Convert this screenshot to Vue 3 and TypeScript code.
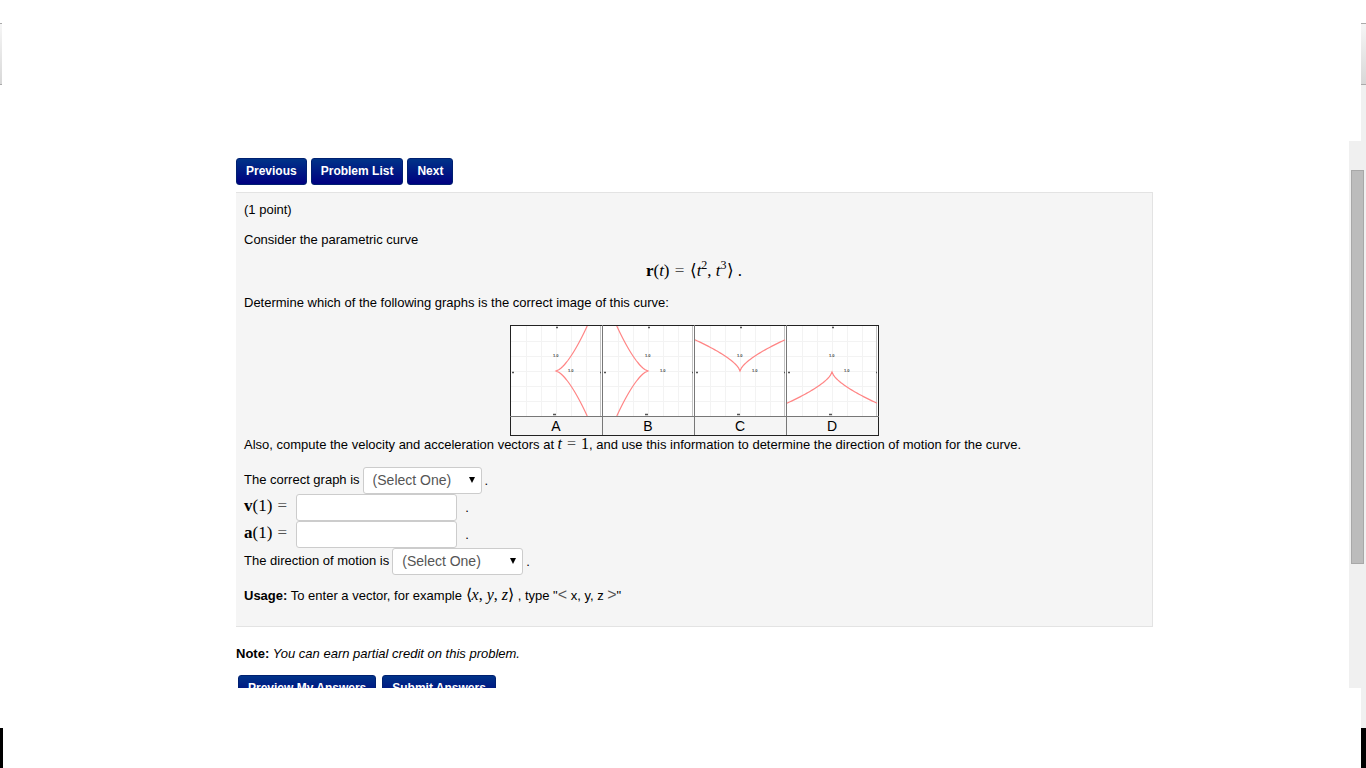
<script setup lang="ts">
import { ref } from 'vue'

type Direction = 'right' | 'left' | 'up' | 'down'

interface Graph {
  label: string
  points: string
}

const centre = 45
const unit = 15

function cusp(direction: Direction): string {
  const points: string[] = []
  for (let i = -30; i <= 30; i++) {
    const along = (i / 30) * 3 * unit
    const away = Math.pow(Math.abs(i / 10), 2 / 3) * unit
    if (direction === 'right') points.push(`${centre + away},${centre + along}`)
    if (direction === 'left') points.push(`${centre - away},${centre + along}`)
    if (direction === 'up') points.push(`${centre + along},${centre - away}`)
    if (direction === 'down') points.push(`${centre + along},${centre + away + 1}`)
  }
  return points.join(' ')
}

const graphs: Graph[] = [
  { label: 'A', points: cusp('right') },
  { label: 'B', points: cusp('left') },
  { label: 'C', points: cusp('up') },
  { label: 'D', points: cusp('down') },
]

const gridLines = [15, 30, 45, 60, 75]
const graphChoice = ref('')
const motionChoice = ref('')
const velocity = ref('')
const acceleration = ref('')
</script>

<template>
  <div class="window">
    <div class="top">
      <div class="toolbar-edge left"></div>
      <div class="toolbar-edge right"></div>
    </div>

    <div class="viewport">
      <main class="content">
        <nav class="buttons">
          <button type="button">Previous</button>
          <button type="button">Problem List</button>
          <button type="button">Next</button>
        </nav>

        <section class="problem">
          <p>(1 point)</p>
          <p>Consider the parametric curve</p>
          <div class="formula math"><b>r</b>(<i>t</i>) <span class="eq">=</span> ⟨<i>t</i><sup>2</sup>, <i>t</i><sup>3</sup>⟩ .</div>
          <p>Determine which of the following graphs is the correct image of this curve:</p>

          <table class="graphs">
            <tbody>
              <tr>
                <td v-for="graph in graphs" :key="graph.label">
                  <svg class="plot" viewBox="0 0 91 90" role="img" :aria-label="'Graph ' + graph.label">
                    <rect width="91" height="90" fill="#fff" />
                    <g stroke="#f3f3f3" stroke-width="1">
                      <line v-for="g in gridLines" :key="'v' + g" :x1="g + 0.5" y1="0" :x2="g + 0.5" y2="90" />
                      <line v-for="g in gridLines" :key="'h' + g" x1="0" :y1="g + 0.5" x2="90" :y2="g + 0.5" />
                    </g>
                    <path d="M89.5 0V90" stroke="#c4c4c4" />
                    <g class="tick">
                      <text x="42" y="31">1.0</text>
                      <text x="57" y="46">1.0</text>
                    </g>
                    <path d="M1 46.5H3M89 46.5H90M45 1.5H47M42 88.5H45" stroke="#555" stroke-width="1.4" />
                    <polyline :points="graph.points" fill="none" stroke="#ff8585" stroke-width="1.2" />
                  </svg>
                </td>
              </tr>
              <tr>
                <td v-for="graph in graphs" :key="graph.label" class="name">{{ graph.label }}</td>
              </tr>
            </tbody>
          </table>

          <p class="also">Also, compute the velocity and acceleration vectors at <span class="math"><i>t</i> <span class="eq">=</span> 1</span>, and use this information to determine the direction of motion for the curve.</p>

          <div class="row">
            <label for="graph">The correct graph is</label>
            <span class="picker">
              <select id="graph" v-model="graphChoice" class="graph-select">
                <option value="">(Select One)</option>
                <option v-for="graph in graphs" :key="graph.label">{{ graph.label }}</option>
              </select>
              <svg viewBox="0 0 6 6"><path d="M0 0H6L3 6Z" /></svg>
            </span>
            <span>.</span>
          </div>
          <div class="row answer">
            <label for="velocity" class="math"><b>v</b>(1) <span class="eq">=</span></label>
            <input id="velocity" v-model="velocity" type="text" />
            <span>.</span>
          </div>
          <div class="row answer">
            <label for="acceleration" class="math"><b>a</b>(1) <span class="eq">=</span></label>
            <input id="acceleration" v-model="acceleration" type="text" />
            <span>.</span>
          </div>
          <div class="row">
            <label for="motion">The direction of motion is</label>
            <span class="picker">
              <select id="motion" v-model="motionChoice" class="motion-select">
                <option value="">(Select One)</option>
              </select>
              <svg viewBox="0 0 6 6"><path d="M0 0H6L3 6Z" /></svg>
            </span>
            <span>.</span>
          </div>

          <p class="usage"><b>Usage:</b> To enter a vector, for example <span class="math">⟨<i>x</i>, <i>y</i>, <i>z</i>⟩</span> , type "<span class="angle">&lt;</span> x, y, z <span class="angle">&gt;</span>"</p>
        </section>

        <p class="note"><b>Note:</b> <i>You can earn partial credit on this problem.</i></p>
        <div class="buttons submit">
          <button type="button">Preview My Answers</button>
          <button type="button">Submit Answers</button>
        </div>
      </main>
      <div class="scrollbar"><div class="thumb"></div></div>
    </div>

    <div class="bottom">
      <div class="task-edge left"></div>
      <div class="task-edge right"></div>
    </div>
  </div>
</template>

<style>
body {
  background: #fff;
  overflow: hidden;
}
</style>

<style scoped>
.window {
  display: grid;
  grid-template-rows: 141px minmax(0, 1fr) 80px;
  height: 100vh;
  font: 13px/20px "Liberation Sans", Arial, sans-serif;
  color: #000;
}
.top,
.bottom {
  display: flex;
  justify-content: space-between;
}
.toolbar-edge {
  box-sizing: border-box;
  width: 2px;
  height: 62px;
  margin-top: 23px;
  border-top: 1px solid #aaa;
  border-bottom: 1px solid #aaa;
  background: linear-gradient(#f6f6f6, #d8d8d8);
}
.top .right {
  box-sizing: content-box;
  width: 5px;
  height: 60px;
  box-shadow: 0 56px 0 #f0f0f0;
}
.task-edge {
  width: 3px;
  border-top: 40px solid transparent;
  background: #000 padding-box;
}
.bottom .right {
  width: 5px;
  border-top-color: #f0f0f0;
}
.viewport {
  display: flex;
  overflow: hidden;
}
.content {
  flex: 1;
  padding: 17px 196px 0 236px;
}
.scrollbar {
  box-sizing: border-box;
  width: 17px;
  padding: 29px 2px 0;
  background: #f0f0f0;
}
.thumb {
  box-sizing: border-box;
  width: 13px;
  height: 76%;
  border: 1px solid #a8a8a8;
  background: #bcbcbc;
}
.buttons {
  display: flex;
  gap: 4px;
}
.buttons button {
  height: 27px;
  padding: 0 9px;
  border: 1px solid #002070;
  border-radius: 3px;
  background: linear-gradient(#003388, #000080);
  color: #fff;
  font: bold 12px/25px "Liberation Sans", Arial, sans-serif;
}
.problem {
  margin-top: 7px;
  padding: 7px 8px 20px;
  border: 1px solid #e3e3e3;
  border-left: 0;
  background: #f5f5f5;
}
p {
  margin: 0 0 10px;
}
.math {
  font-family: "Liberation Serif", "Times New Roman", serif;
  font-size: 17px;
}
.eq {
  padding: 0 1px;
  color: #555;
}
.formula {
  height: 22px;
  margin-bottom: 11px;
  line-height: 22px;
  text-align: center;
}
.formula sup {
  font-size: 12px;
  line-height: 0;
}
.graphs {
  margin: 12px auto 0;
  border: 1px solid #222;
  border-collapse: collapse;
}
.graphs td {
  padding: 0;
  border: 1px solid #777;
  border-top-color: #222;
}
.graphs td:first-child {
  border-left-color: #222;
}
.graphs td:last-child {
  border-right-color: #222;
}
.graphs .name {
  height: 18px;
  border-top-color: #777;
  border-bottom-color: #222;
  font-size: 14px;
  line-height: 18px;
  text-align: center;
}
.plot {
  display: block;
  width: 91px;
  height: 90px;
}
.tick text {
  fill: #444;
  font: bold 4px "Liberation Sans", Arial, sans-serif;
}
.also {
  margin-bottom: 13px;
  line-height: 18px;
}
.also .math,
.usage .math {
  font-size: 16px;
  line-height: 1px;
}
.row {
  display: flex;
  align-items: center;
  gap: 3px;
  height: 27px;
}
.row label {
  padding-bottom: 2px;
}
.answer {
  gap: 8px;
}
.answer label {
  padding-bottom: 4px;
}
.picker {
  position: relative;
  display: flex;
}
.picker svg {
  position: absolute;
  top: 10px;
  right: 7px;
  width: 6px;
  height: 6px;
  pointer-events: none;
}
select,
input {
  box-sizing: border-box;
  height: 27px;
  margin: 0;
  padding: 0 9px 2px;
  border: 1px solid #ccc;
  border-radius: 3px;
  background: #fff;
  color: #555;
  font: 14px/20px "Liberation Sans", Arial, sans-serif;
}
select {
  appearance: none;
}
.graph-select {
  width: 119px;
}
.motion-select {
  width: 131px;
}
input {
  width: 161px;
}
.usage {
  margin: 11px 0 0;
}
.angle {
  color: #555;
  font-size: 16px;
  line-height: 1px;
}
.note {
  margin: 17px 0 11px;
}
.submit {
  gap: 6px;
  padding-left: 2px;
}
</style>
